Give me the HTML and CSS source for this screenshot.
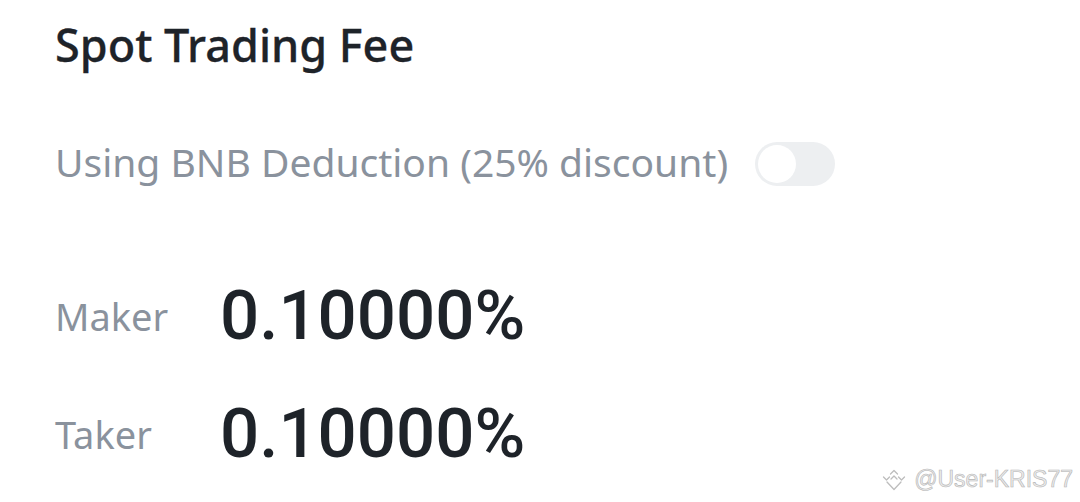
FILE: index.html
```html
<!DOCTYPE html>
<html>
<head>
<meta charset="utf-8">
<link rel="stylesheet" href="styles.css">
</head>
<body>
<div class="panel">
  <h1 class="title">Spot Trading Fee</h1>
  <div class="bnb-row">
    <span class="bnb-label">Using BNB Deduction (25% discount)</span>
    <span class="toggle"><span class="knob"></span></span>
  </div>
  <div class="fees">
    <div class="fee-row">
      <span class="fee-label">Maker</span>
      <span class="fee-value">0.10000%</span>
    </div>
    <div class="fee-row">
      <span class="fee-label">Taker</span>
      <span class="fee-value">0.10000%</span>
    </div>
  </div>
</div>
<div class="watermark">
  <svg class="wm-icon" width="24" height="22" viewBox="0 0 24 22" fill="none" stroke="#bdbdbd" stroke-width="1.3" stroke-linejoin="round" stroke-linecap="round">
    <path d="M8.5 5 L12 1.5 L15.5 5"/>
    <path d="M1.5 8 L4.5 11 L7.5 8"/>
    <path d="M9 10 L12 7 L15 10"/>
    <path d="M16.5 8 L19.5 11 L22.5 8"/>
    <path d="M5 13 L12 20.5 L19 13"/>
  </svg>
  <span class="wm-text">@User-KRIS77</span>
</div>
</body>
</html>
```
FILE: styles.css
```css
html, body {
  margin: 0;
  padding: 0;
  background: #ffffff;
}
body {
  width: 1080px;
  height: 502px;
  overflow: hidden;
  position: relative;
  font-family: "Noto Sans", "Open Sans", sans-serif;
}
.panel {
  padding: 18px 0 0 55px;
}
.title {
  margin: 0;
  font-size: 45px;
  font-weight: 500;
  color: #1e2329;
  line-height: 54px;
  -webkit-text-stroke: 0.3px #1e2329;
}
.bnb-row {
  display: flex;
  align-items: center;
  margin-top: 65px;
  gap: 27px;
  height: 50px;
}
.bnb-label {
  font-size: 39px;
  color: #8a929d;
  line-height: 50px;
}
.toggle {
  width: 80px;
  height: 44px;
  margin-top: 4px;
  border-radius: 22px;
  background: #edeff1;
  display: flex;
  align-items: center;
  padding-left: 3px;
  box-sizing: border-box;
}
.knob {
  width: 38px;
  height: 38px;
  border-radius: 50%;
  background: #ffffff;
}
.fees {
  margin-top: 94px;
  display: flex;
  flex-direction: column;
  gap: 48px;
}
.fee-row {
  display: flex;
  align-items: center;
  height: 70px;
}
.fee-label {
  width: 165px;
  font-size: 38px;
  line-height: 50px;
  color: #8a929d;
}
.fee-value {
  font-family: "Roboto", "Noto Sans", sans-serif;
  font-size: 69px;
  line-height: 70px;
  font-weight: 500;
  color: #1e2329;
}
.watermark {
  position: absolute;
  right: 7px;
  bottom: 9px;
  display: flex;
  align-items: center;
  gap: 8px;
}
.wm-text {
  font-family: "Liberation Sans", sans-serif;
  font-size: 23px;
  color: #ececec;
  -webkit-text-stroke: 0.6px #b5b5b5;
}
```
